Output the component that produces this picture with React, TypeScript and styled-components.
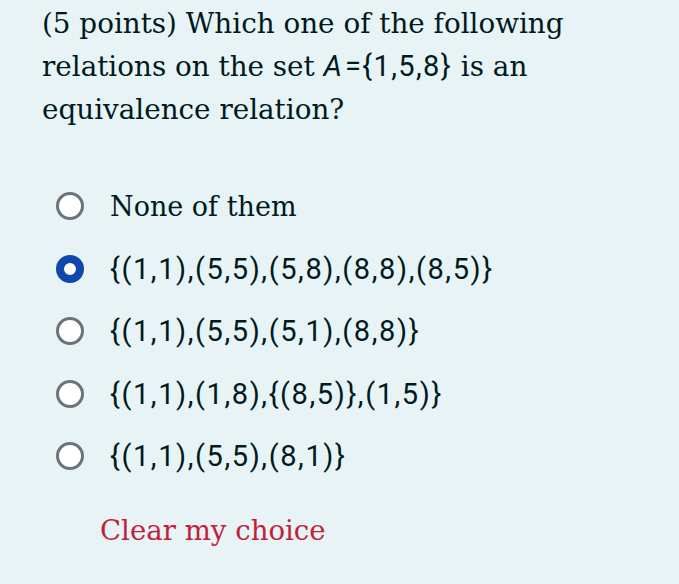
import React, { FunctionComponent } from 'react';
import styled, { createGlobalStyle } from 'styled-components';

const GlobalStyle = createGlobalStyle`
  html, body {
    margin: 0;
    padding: 0;
    background-color: #e7f3f5;
  }
  body {
    font-family: "DejaVu Serif", "Liberation Serif", serif;
    color: #001a1e;
  }
`;

const Wrapper = styled.div`
  width: 679px;
  height: 584px;
  background-color: #e7f3f5;
  padding: 2px 0 0 42px;
  box-sizing: border-box;
`;

const Question = styled.div`
  font-size: 27.8px;
  line-height: 43px;
  width: 580px;
`;

const MathText = styled.span`
  font-family: Roboto, "Liberation Sans", sans-serif;
  font-size: 29px;
  letter-spacing: 1.4px;
`;

const MathVar = styled.span`
  font-family: Roboto, "Liberation Sans", sans-serif;
  font-size: 29px;
  font-style: italic;
  margin-right: 3px;
`;

const Answers = styled.div`
  display: flex;
  flex-direction: column;
  margin-top: 44px;
  padding-left: 14px;
`;

const Option = styled.label`
  display: flex;
  align-items: center;
  height: 62.5px;
  gap: 26px;
`;

const Radio = styled.span<{ checked?: boolean }>`
  width: 28px;
  height: 28px;
  box-sizing: border-box;
  border-radius: 50%;
  background: #ffffff;
  border: ${({ checked }) => (checked ? '8.5px solid #0f47ad' : '3px solid #6a737b')};
  flex-shrink: 0;
`;

const OptionText = styled.span<{ math?: boolean }>`
  font-size: ${({ math }) => (math ? '29px' : '27px')};
  letter-spacing: ${({ math }) => (math ? '1.6px' : 'normal')};
  font-family: ${({ math }) => (math ? 'Roboto, "Liberation Sans", sans-serif' : '"DejaVu Serif", "Liberation Serif", serif')};
`;

const ClearChoice = styled.a`
  display: block;
  margin: 26px 0 0 58px;
  font-size: 27.6px;
  color: #c31f3c;
  text-decoration: none;
`;

const options = [
  { text: 'None of them', math: false },
  { text: '{(1,1),(5,5),(5,8),(8,8),(8,5)}', math: true, checked: true },
  { text: '{(1,1),(5,5),(5,1),(8,8)}', math: true },
  { text: '{(1,1),(1,8),{(8,5)},(1,5)}', math: true },
  { text: '{(1,1),(5,5),(8,1)}', math: true },
];

const App: FunctionComponent = () => {
  return <Wrapper>
    <GlobalStyle />
    <Question>
      (5 points) Which one of the following relations on the set <MathVar>A</MathVar><MathText>={'{'}1,5,8{'}'}</MathText> is an equivalence relation?
    </Question>
    <Answers>
      {options.map(({ text, math, checked }) => <Option key={text}>
        <Radio checked={checked} />
        <OptionText math={math}>{text}</OptionText>
      </Option>)}
    </Answers>
    <ClearChoice href="#">Clear my choice</ClearChoice>
  </Wrapper>
}

export default App;
